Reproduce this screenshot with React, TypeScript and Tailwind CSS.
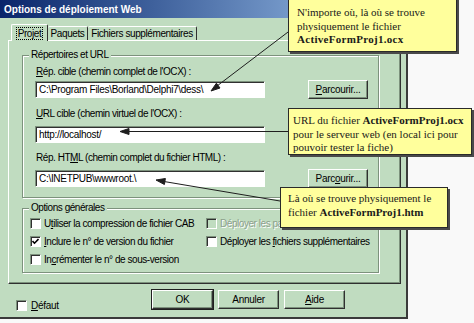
import React from 'react';

const ui = "font-['Liberation_Sans',Arial,sans-serif]";
const serif = "font-['Liberation_Serif','Times_New_Roman',serif]";

function Field({ value }: { value: string }) {
    return (
        <div className="w-[230px] h-[17px] bg-white border border-t-[#7d927d] border-l-[#7d927d] border-b-white border-r-white shadow-[inset_1px_1px_0_#303030] pl-[3px] text-[10px] leading-[15px] tracking-[-0.3px] text-black whitespace-nowrap overflow-hidden">
            {value}
        </div>
    );
}

function Btn({ children, def = false, w = 'w-[60px]', h = 'h-[19px]' }: { children: React.ReactNode; def?: boolean; w?: string; h?: string }) {
    return (
        <div
            className={`${w} ${h} flex items-center justify-center bg-[#c0dcc0] border border-t-white border-l-white border-r-[#303030] border-b-[#303030] shadow-[inset_-1px_-1px_0_#7d927d] text-[10px] tracking-[-0.3px] text-black ${
                def ? 'outline outline-1 outline-[#202020]' : ''
            }`}
        >
            {children}
        </div>
    );
}

function Check({ checked = false, disabled = false }: { checked?: boolean; disabled?: boolean }) {
    return (
        <div
            className={`w-[11px] h-[11px] shrink-0 border border-t-[#7d927d] border-l-[#7d927d] border-b-white border-r-white shadow-[inset_1px_1px_0_#303030] flex items-center justify-center ${
                disabled ? 'bg-[#c0dcc0]' : 'bg-white'
            }`}
        >
            {checked && (
                <svg width="7" height="7" viewBox="0 0 7 7">
                    <path d="M0.5 3 L2.5 5.2 L6.5 1" stroke="#000" strokeWidth="1.6" fill="none" />
                </svg>
            )}
        </div>
    );
}

function Option({ children, checked, disabled }: { children: React.ReactNode; checked?: boolean; disabled?: boolean }) {
    return (
        <div className="flex items-center gap-[3px] h-[18px] whitespace-nowrap">
            <Check checked={checked} disabled={disabled} />
            <span className={disabled ? 'text-[#8ca08c] [text-shadow:1px_1px_0_#fff]' : 'text-black'}>{children}</span>
        </div>
    );
}

export default function App() {
    return (
        <div className={`relative w-[474px] h-[323px] bg-[#f9f9f9] overflow-hidden ${ui}`}>
            {/* Dialog */}
            <div className="w-[408px] h-[319px] bg-[#c0dcc0] border-r-2 border-b-2 border-[#3a3a3a] flex flex-col">
                {/* Title bar */}
                <div className="h-[18px] bg-gradient-to-r from-[#0a246a] to-[#a6caf0] flex items-center pl-[4px] text-white text-[10px] font-bold">
                    Options de déploiement Web
                </div>

                {/* Tabs */}
                <div className="h-[22px] flex items-end pl-[11px] text-[10px] tracking-[-0.4px] text-black whitespace-nowrap">
                    <div className="relative z-10 -mb-px w-[37px] h-[17px] bg-[#c0dcc0] border-t border-l border-white border-r border-r-[#303030] rounded-t-[2px] flex items-center justify-center">
                        <span className="border border-dotted border-black px-[1px] leading-[11px]">Projet</span>
                    </div>
                    <div className="w-[40px] h-[14px] border-t border-white border-r border-r-[#303030] rounded-t-[2px] flex items-center justify-center">
                        Paquets
                    </div>
                    <div className="w-[109px] h-[14px] border-t border-white border-r border-r-[#303030] rounded-t-[2px] flex items-center justify-center">
                        Fichiers supplémentaires
                    </div>
                </div>

                {/* Tab panel */}
                <div className="ml-[8px] w-[393px] h-[244px] border border-t-white border-l-white border-r-[#303030] border-b-[#303030] shadow-[inset_-1px_-1px_0_#7d927d] text-[10px] tracking-[-0.45px] text-black">
                    {/* Répertoires et URL */}
                    <div className="ml-[13px] mt-[14px] w-[357px] h-[143px] border border-[#7d927d] shadow-[1px_1px_0_#fff,inset_1px_1px_0_#fff] flex flex-col">
                        <span className="-mt-[7px] ml-[6px] w-fit px-[2px] bg-[#c0dcc0] leading-[12px]">Répertoires et URL</span>
                        <div className="ml-[13px] mt-[5px] leading-[12px]">
                            <u>R</u>ép. cible (chemin complet de l'OCX) :
                        </div>
                        <div className="ml-[12px] mt-[2px] flex items-center gap-[43px]">
                            <Field value="C:\Program Files\Borland\Delphi7\dess\" />
                            <Btn>
                                <u>P</u>arcourir...
                            </Btn>
                        </div>
                        <div className="ml-[13px] mt-[9px] leading-[12px]">
                            <u>U</u>RL cible (chemin virtuel de l'OCX) :
                        </div>
                        <div className="ml-[12px] mt-[6px]">
                            <Field value="http://localhost/" />
                        </div>
                        <div className="ml-[13px] mt-[9px] leading-[12px]">
                            Rép. HT<u>M</u>L (chemin complet du fichier HTML) :
                        </div>
                        <div className="ml-[12px] mt-[5px] flex items-center gap-[43px]">
                            <Field value="C:\INETPUB\wwwroot.\" />
                            <Btn>
                                Parc<u>o</u>urir...
                            </Btn>
                        </div>
                    </div>

                    {/* Options générales */}
                    <div className="ml-[13px] mt-[10px] w-[357px] h-[65px] border border-[#7d927d] shadow-[1px_1px_0_#fff,inset_1px_1px_0_#fff] flex flex-col">
                        <span className="-mt-[7px] ml-[6px] w-fit px-[2px] bg-[#c0dcc0] leading-[12px]">Options générales</span>
                        <div className="ml-[7px] grid grid-cols-[176px_1fr]">
                            <Option>
                                U<u>t</u>iliser la compression de fichier CAB
                            </Option>
                            <Option disabled>Déployer les paquets requis</Option>
                            <Option checked>
                                <u>I</u>nclure le n° de version du fichier
                            </Option>
                            <Option>
                                Déployer les <u>f</u>ichiers supplémentaires
                            </Option>
                            <Option>
                                In<u>c</u>rémenter le n° de sous-version
                            </Option>
                        </div>
                    </div>
                </div>

                {/* Bottom row */}
                <div className="flex-1 flex items-start pl-[16px] pt-[6px] text-[10px] tracking-[-0.3px] text-black">
                    <div className="mt-[8px] flex items-center gap-[4px]">
                        <Check />
                        <span>
                            <u>D</u>éfaut
                        </span>
                    </div>
                    <div className="ml-auto mr-[61px] flex gap-[5px]">
                        <Btn def w="w-[61px]" h="h-[19px]">
                            OK
                        </Btn>
                        <Btn w="w-[61px]" h="h-[19px]">
                            Annuler
                        </Btn>
                        <Btn w="w-[61px]" h="h-[19px]">
                            <u>A</u>ide
                        </Btn>
                    </div>
                </div>
            </div>

            {/* Arrows */}
            <svg className="absolute inset-0 pointer-events-none" width="474" height="323" viewBox="0 0 474 323">
                <g stroke="#1e1e1e" strokeWidth="1" fill="#1e1e1e">
                    <line x1="292" y1="29" x2="217" y2="86" />
                    <polygon points="211,91 220,88 216.4,83.2" />
                    <line x1="288" y1="131.5" x2="128" y2="131.5" />
                    <polygon points="120,131.5 129,128.5 129,134.5" />
                    <line x1="280" y1="201" x2="164" y2="181.5" />
                    <polygon points="156,180 165.4,178.5 164.4,184.5" />
                </g>
            </svg>

            {/* Callouts */}
            <div className={`absolute left-[288px] -top-[2px] w-[169px] h-[54px] bg-[#ffff9c] border border-[#2a2a2a] shadow-[2px_2px_0_#4a4a4a] pl-[8px] pt-[7px] text-[11px] leading-[13.5px] text-[#1a1a1a] ${serif}`}>
                <div>N'importe où, là où se trouve</div>
                <div>physiquement le fichier</div>
                <div className="font-bold tracking-[0.3px]">ActiveFormProj1.ocx</div>
            </div>
            <div className={`absolute left-[288px] top-[108px] w-[184px] h-[47px] bg-[#ffff9c] border border-[#2a2a2a] shadow-[2px_2px_0_#4a4a4a] pl-[4px] pt-[5px] text-[11px] leading-[13.5px] text-[#1a1a1a] whitespace-nowrap ${serif}`}>
                <div>
                    URL du fichier <b>ActiveFormProj1.ocx</b>
                </div>
                <div>pour le serveur web (en local ici pour</div>
                <div>pouvoir tester la fiche)</div>
            </div>
            <div className={`absolute left-[280px] top-[187px] w-[168px] h-[41px] bg-[#ffff9c] border border-[#2a2a2a] shadow-[2px_2px_0_#4a4a4a] pl-[7px] pt-[4px] text-[11px] leading-[13.5px] text-[#1a1a1a] whitespace-nowrap ${serif}`}>
                <div>Là où se trouve physiquement le</div>
                <div>
                    fichier <b>ActiveFormProj1.htm</b>
                </div>
            </div>
        </div>
    );
}
